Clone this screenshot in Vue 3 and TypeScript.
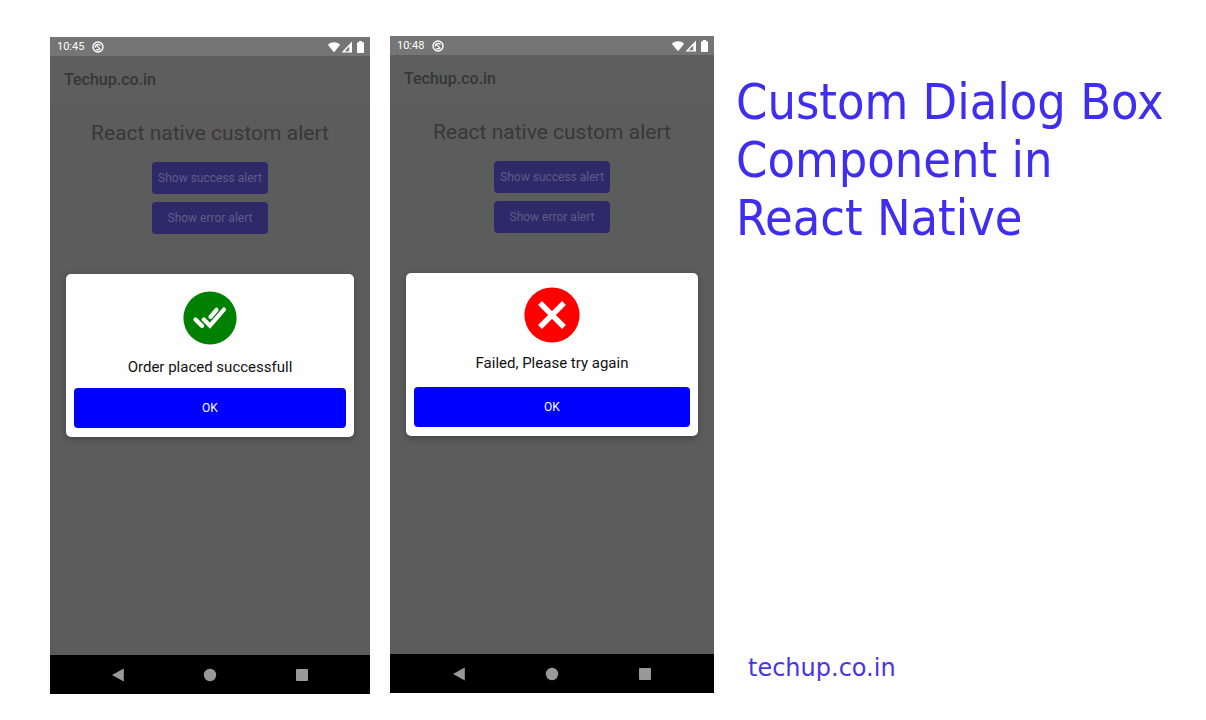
<script setup lang="ts">
interface Screen {
  id: string
  time: string
  kind: 'success' | 'error'
  message: string
}

const screens: Screen[] = [
  { id: 'success', time: '10:45', kind: 'success', message: 'Order placed successfull' },
  { id: 'error', time: '10:48', kind: 'error', message: 'Failed, Please try again' },
]
</script>

<template>
  <main class="page">
    <section v-for="s in screens" :key="s.id" class="phone" :class="s.kind">
      <div class="status">
        <span class="time">{{ s.time }}</span>
        <svg class="badge" viewBox="0 0 12 12" aria-hidden="true">
          <circle cx="6" cy="6" r="5" fill="none" stroke="#fff" stroke-width="1.4" />
          <path d="M3.4 6.6a2.7 2.7 0 0 1 5-1.8M4.4 4.4l4 4M4 8.4c1.400.8 3 .6 4.200-.4" fill="none" stroke="#fff" stroke-width="1.2" />
        </svg>
        <span class="signals">
          <svg class="wifi" viewBox="0 0 12 12" aria-hidden="true">
            <path d="M0 4C.8 2.200 3.200 1.200 6 1.200S11.200 2.200 12 4L6.700 10.600Q6 11.300 5.300 10.600z" fill="#fff" />
          </svg>
          <svg class="cell" viewBox="0 0 12 12" aria-hidden="true">
            <path d="M11 .5v11H.5z" fill="#fff" />
            <path d="M8.200 5.400v4.800H3.700z" fill="#777" />
          </svg>
          <svg class="battery" viewBox="0 0 7 12" aria-hidden="true">
            <path d="M2 0h3v1.300h1.200q.8 0 .8.8v9.100q0 .8-.8.8H.8q-.8 0-.8-.8V2.100q0-.8.8-.8H2z" fill="#fff" />
          </svg>
        </span>
      </div>

      <div class="screen">
        <header class="appbar">Techup.co.in</header>
        <div class="content">
          <h2>React native custom alert</h2>
          <button type="button" class="show">Show success alert</button>
          <button type="button" class="show">Show error alert</button>
        </div>

        <div class="overlay">
          <div class="dialog" role="alertdialog" :aria-labelledby="`msg-${s.id}`">
            <svg v-if="s.kind === 'success'" class="icon" viewBox="0 0 54 54" aria-hidden="true">
              <circle cx="27" cy="27" r="26.600" fill="#008000" />
              <g fill="none" stroke="#fff" stroke-width="4.200" stroke-linecap="round" stroke-linejoin="miter">
                <path d="M12.500 28.500l6.500 6.500" />
                <path d="M20.800 28.500l6.200 6.200L41 18.500" />
                <path d="M27.500 25.800L33.500 18.800" />
              </g>
            </svg>
            <svg v-else class="icon" viewBox="0 0 56 56" aria-hidden="true">
              <circle cx="28" cy="28" r="27.600" fill="#f00" />
              <path d="M16 16l24 24M40 16L16 40" fill="none" stroke="#fff" stroke-width="5.400" />
            </svg>
            <p :id="`msg-${s.id}`">{{ s.message }}</p>
            <button type="button" class="ok">OK</button>
          </div>
        </div>
      </div>

      <nav class="navbar">
        <button type="button" aria-label="Back">
          <svg viewBox="0 0 14 14"><path d="M12.800 .5v13L1 7z" fill="#999" /></svg>
        </button>
        <button type="button" aria-label="Home">
          <svg viewBox="0 0 14 14"><circle cx="7" cy="7" r="6.200" fill="#999" /></svg>
        </button>
        <button type="button" aria-label="Recents">
          <svg viewBox="0 0 14 14"><rect x="1" y="1" width="12" height="12" rx="1" fill="#999" /></svg>
        </button>
      </nav>
    </section>

    <section class="caption">
      <h1>Custom Dialog Box<br />Component in<br />React Native</h1>
      <a href="#">techup.co.in</a>
    </section>
  </main>
</template>

<style>
body {
  margin: 0;
  background: #fefefe;
}
</style>

<style scoped>
.page {
  box-sizing: border-box;
  min-height: 100vh;
  display: grid;
  grid-template-columns: 320fr 324fr 472fr;
  column-gap: 20px;
  padding: 36px 0 26px 50px;
  font-family: Roboto, sans-serif;
}
.phone {
  display: flex;
  flex-direction: column;
  min-height: calc(100vh - 63px);
  background: #5c5c5c;
}
.phone.success {
  align-self: end;
}
.phone.error {
  align-self: start;
}
.status {
  display: flex;
  align-items: center;
  height: 19px;
  padding: 0 6px 0 7px;
  background: #757575;
  color: #fff;
  font-size: 11px;
}
.badge {
  width: 12px;
  height: 12px;
  margin-left: 8px;
}
.signals {
  display: flex;
  align-items: center;
  margin-left: auto;
}
.wifi,
.cell {
  width: 12px;
  height: 12px;
}
.cell {
  margin-left: 1px;
}
.battery {
  width: 7px;
  height: 12px;
  margin-left: 4px;
}
.screen {
  position: relative;
  flex: 1;
}
.appbar {
  height: 48px;
  padding: 0 14px;
  line-height: 48px;
  font-size: 16px;
  font-weight: 500;
  color: #363636;
  background: #5e5e5e;
}
.content {
  display: flex;
  flex-direction: column;
  align-items: center;
  gap: 8px;
  padding-top: 16px;
}
h2 {
  margin: 0 0 8px;
  font-size: 21px;
  line-height: 26px;
  font-weight: 400;
  color: #383838;
}
button {
  border: 0;
  padding: 0;
  font-family: inherit;
  cursor: pointer;
}
.show {
  width: 116px;
  height: 32px;
  border-radius: 4px;
  background: #2e2968;
  color: #5f5c88;
  font-size: 12px;
}
.overlay {
  position: absolute;
  inset: 0;
  display: flex;
  align-items: center;
  padding: 0 16px;
}
.dialog {
  flex: 1;
  display: flex;
  flex-direction: column;
  align-items: center;
  padding: 17px 8px 9px;
  border-radius: 5px;
  background: #fefefe;
  box-shadow: 0 2px 6px rgba(0, 0, 0, 0.3);
}
.icon {
  width: 54px;
  height: 54px;
}
.dialog p {
  margin: 12px 0 11px;
  font-size: 15px;
  line-height: 20px;
  color: #111;
}
.ok {
  align-self: stretch;
  height: 40px;
  border-radius: 4px;
  background: #00f;
  color: #fff;
  font-size: 12px;
}
.error .icon {
  width: 56px;
  height: 56px;
}
.error .dialog {
  padding-top: 14px;
}
.error .dialog p {
  margin: 10px 0 14px;
}
.navbar {
  display: flex;
  justify-content: space-around;
  align-items: center;
  height: 39px;
  padding: 0 22px;
  background: #000;
}
.navbar button {
  display: flex;
  background: none;
}
.navbar svg {
  width: 14px;
  height: 14px;
}
.caption {
  display: flex;
  flex-direction: column;
  justify-content: space-between;
  align-items: flex-start;
  padding: 37px 0 12px 2px;
  font-family: "DejaVu Sans", sans-serif;
  color: #3f2df0;
}
h1 {
  margin: 0;
  font-family: "DejaVu Sans Condensed", "DejaVu Sans", sans-serif;
  font-stretch: condensed;
  font-size: 50px;
  line-height: 58px;
  font-weight: 400;
  white-space: nowrap;
}
a {
  margin-left: 12px;
  font-size: 24px;
  line-height: 28px;
  color: #4a35dd;
  text-decoration: none;
}
</style>
